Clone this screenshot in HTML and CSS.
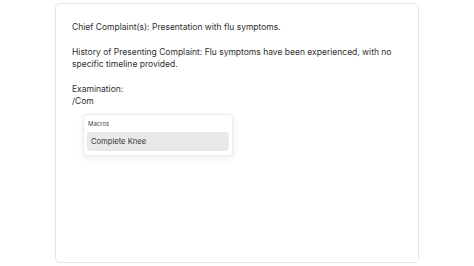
FILE: index.html
```html
<!DOCTYPE html>
<html lang="en">
<head>
    <meta charset="UTF-8">
    <meta name="viewport" content="width=device-width, initial-scale=1.0">
    <title>Note Editor</title>
    <link rel="stylesheet" href="styles.css">
</head>
<body>
    <div class="note-card">
        <div class="note-editor">
            <p>Chief Complaint(s): Presentation with flu symptoms.</p>
            <p class="empty"><br></p>
            <p>History of Presenting Complaint: Flu symptoms have been experienced, with no specific timeline provided.</p>
            <p class="empty"><br></p>
            <p>Examination:</p>
            <p>/Com</p>
        </div>

        <div class="macro-menu">
            <div class="macro-label">Macros</div>
            <div class="macro-item active">Complete Knee</div>
        </div>
    </div>
</body>
</html>
```

FILE: styles.css
```css
* {
    margin: 0;
    padding: 0;
    box-sizing: border-box;
}

body {
    font-family: Inter, 'Noto Sans', sans-serif;
    background: #ffffff;
    color: #2e2e2e;
}

.note-card {
    position: relative;
    width: 364px;
    height: 260px;
    margin: 3px auto 0;
    border: 1px solid #e6e6e6;
    border-radius: 5px;
    padding: 17px 16px;
}

.note-editor {
    font-size: 8.5px;
    line-height: 12.4px;
}

.macro-menu {
    position: absolute;
    left: 27px;
    top: 110px;
    width: 150px;
    background: #ffffff;
    border: 1px solid #ececec;
    border-radius: 4px;
    box-shadow: 0 2px 6px rgba(0, 0, 0, 0.08);
    padding: 5px 3px 4px;
}

.macro-label {
    font-size: 6px;
    color: #444;
    padding: 0 1px;
    margin-bottom: 5px;
}

.macro-item {
    font-size: 7.6px;
    color: #333;
    padding: 5px 4px;
    border-radius: 4px;
}

.macro-item.active {
    background: #e9e9e9;
}
```
